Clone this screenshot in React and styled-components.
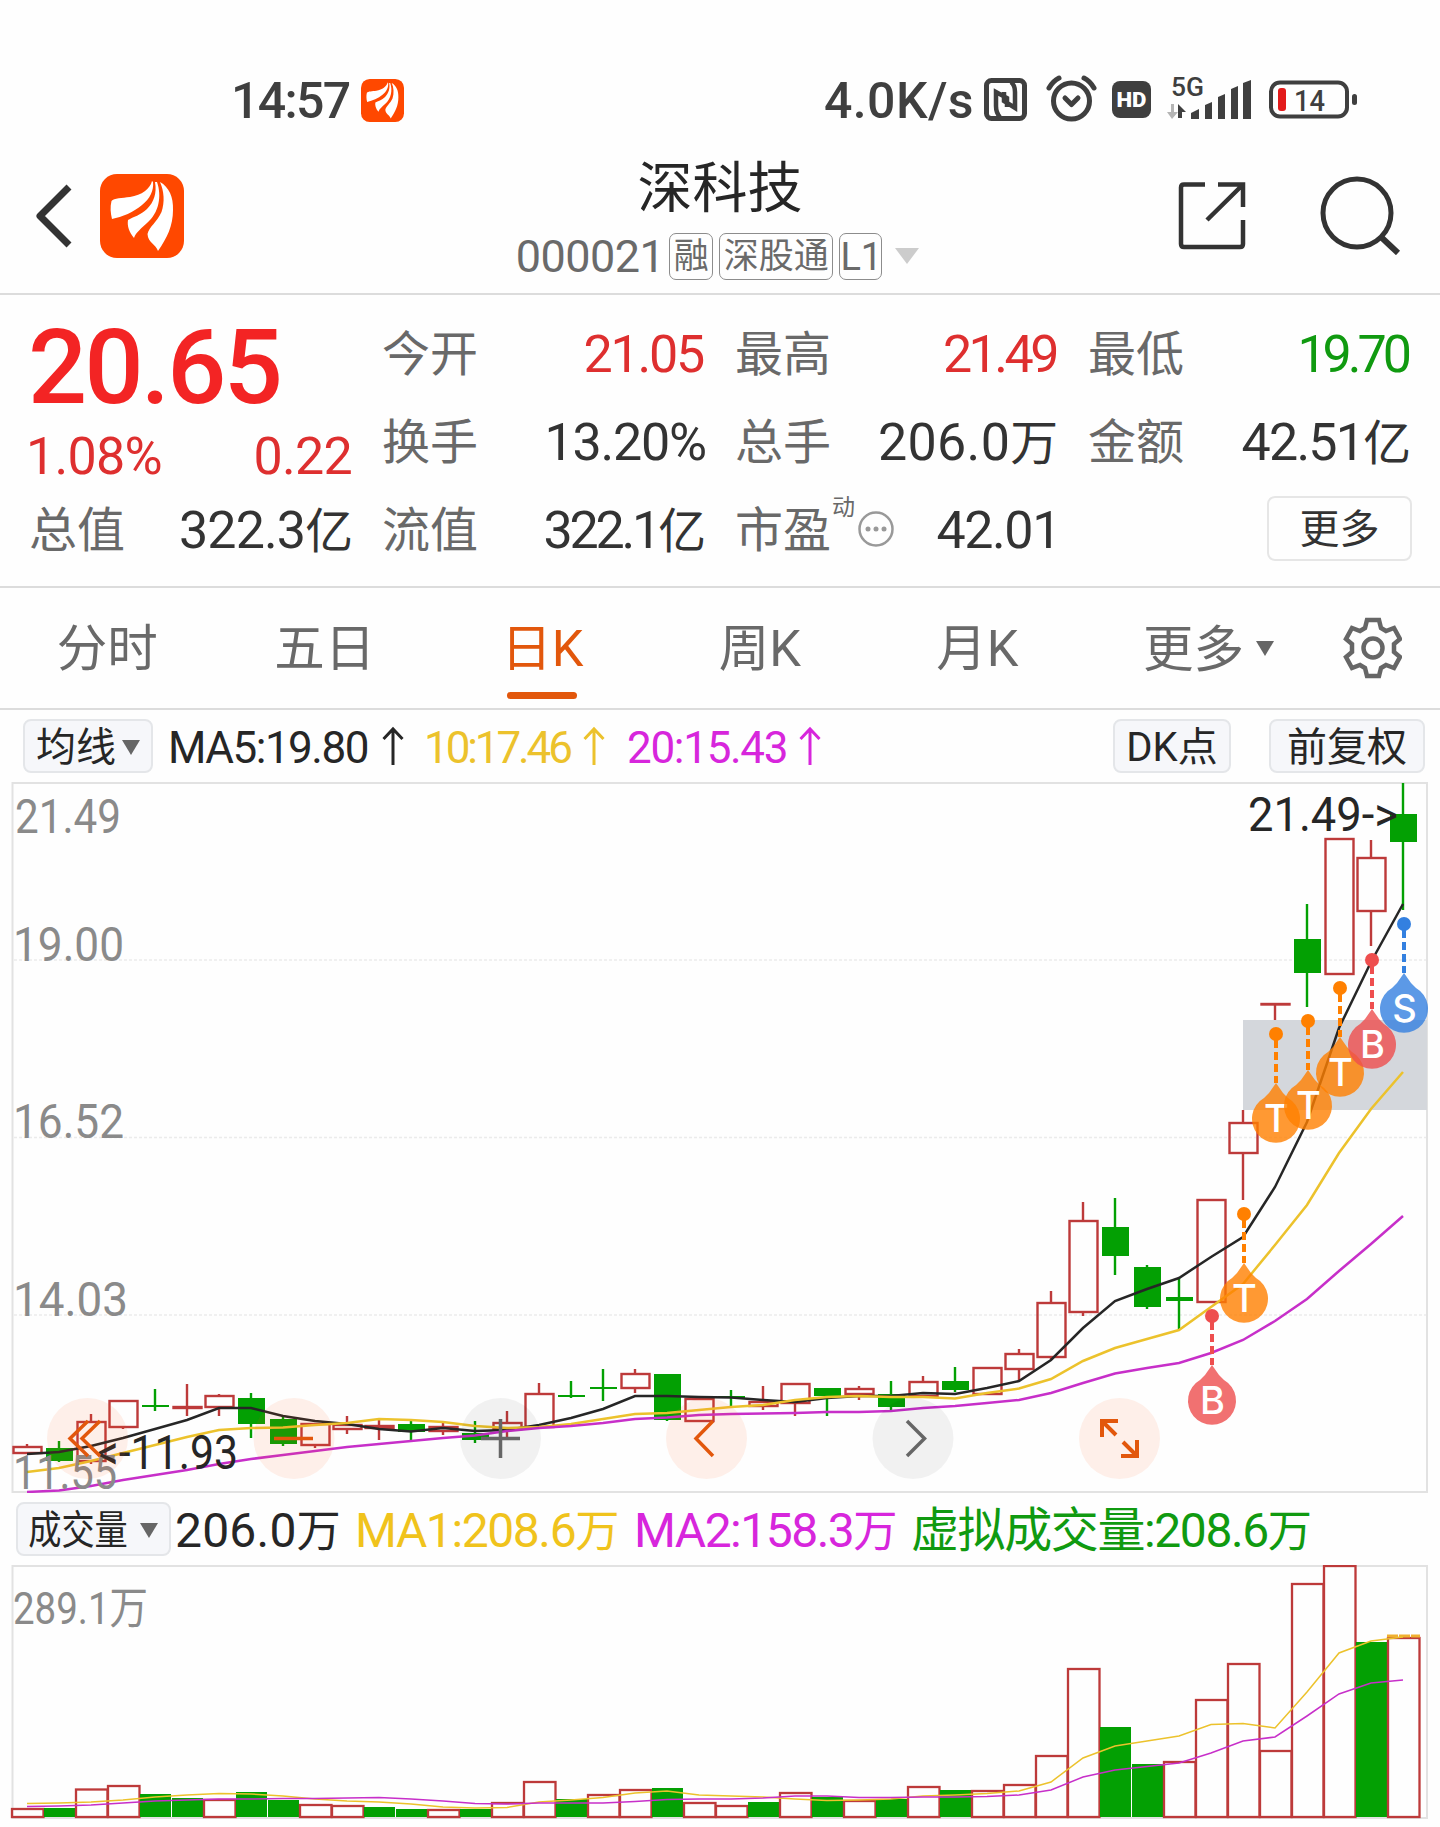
import styled, { createGlobalStyle } from "styled-components";
import { useState } from "react";

const GlobalStyle = createGlobalStyle`
  body {
    margin: 0;
    background: #fefefe;
    font-family: Roboto, "Noto Sans CJK SC", sans-serif;
    color: #2b2b2b;
  }
  * {
    box-sizing: border-box;
  }
  svg {
    display: block;
    flex: none;
  }
`;

const Page = styled.div`
  width: 1440px;
  height: 1827px;
  overflow: hidden;
  display: flex;
  flex-direction: column;
`;

const StatusBar = styled.div`
  height: 138px;
  padding: 62px 82px 0 231px;
  display: flex;
  align-items: center;
  color: #3f3f3f;
`;
const Clock = styled.span`
  font-size: 50px;
  font-weight: 500;
  letter-spacing: -1.7px;
  width: 130px;
  padding-top: 2px;
`;
const Speed = styled.span`
  font-size: 50px;
  font-weight: 500;
  letter-spacing: 0.4px;
  margin-left: auto;
  width: 160px;
  padding-top: 2px;
  white-space: nowrap;
`;

const Header = styled.div`
  height: 157px;
  border-bottom: 2px solid #dcdcdc;
  display: flex;
  justify-content: space-between;
  padding: 0 39px 0 34px;
`;
const HeaderSide = styled.div`
  display: flex;
  align-items: center;
  gap: ${(props) => props.$gap};
  width: 400px;
  justify-content: ${(props) => (props.$end ? "flex-end" : "flex-start")};
  height: ${(props) => (props.$end ? "154px" : "156px")};
`;
const TitleBox = styled.div`
  display: flex;
  flex-direction: column;
  align-items: center;
  padding-top: 14px;
`;
const StockName = styled.div`
  font-size: 55px;
  line-height: 72px;
  color: #262626;
  padding-left: 5px;
`;
const CodeRow = styled.div`
  display: flex;
  align-items: center;
  gap: 6px;
  margin-top: 8px;
  height: 48px;
  font-size: 45px;
  line-height: 48px;
  color: #6a6a6a;
  white-space: nowrap;
`;
const Code = styled.span`
  letter-spacing: -0.5px;
  padding-top: 2px;
  margin-right: -1px;
`;
const Tag = styled.span`
  border: 1.5px solid #8c8c8c;
  border-radius: 7px;
  height: 47px;
  width: ${(props) => props.$w}px;
  font-size: ${(props) => props.$size || 35}px;
  line-height: 46px;
  text-align: center;
`;
const Triangle = styled.i`
  border: solid transparent;
  border-width: ${(props) => props.$h}px ${(props) => props.$w / 2}px 0;
  border-top-color: ${(props) => props.color || "#666"};
  margin-left: ${(props) => props.$ml || 0}px;
`;

const Quote = styled.div`
  height: 293px;
  border-bottom: 2px solid #dcdcdc;
  padding: 16px 30px 0 29px;
  display: grid;
  grid-template-columns: repeat(4, 320px);
  grid-template-rows: repeat(3, 88px);
  column-gap: 33px;
`;
const PriceBox = styled.div`
  grid-row: span 2;
  color: #de2f2f;
`;
const Price = styled.div`
  font-size: 104px;
  font-weight: 500;
  line-height: 100px;
  padding-top: 7px;
  letter-spacing: -2.6px;
  margin-left: -1px;
  color: #f32424;
`;
const Change = styled.div`
  display: flex;
  justify-content: space-between;
  line-height: 78px;
  font-size: 52px;
  margin: 0 -3px 0 -3px;
  letter-spacing: -0.7px;
`;
const Cell = styled.div`
  display: flex;
  justify-content: space-between;
  align-items: center;
  line-height: 88px;
  white-space: nowrap;
`;
const Label = styled.span`
  font-size: 48px;
  color: #696969;
  display: flex;
  align-items: center;
`;
const Value = styled.span`
  font-size: 52px;
  color: ${(props) => props.color || "#333"};
  letter-spacing: ${(props) => props.$track || 0}px;
  margin-right: ${(props) => props.$mr}px;
`;
const Unit = styled.span`
  font-size: 0.92em;
  letter-spacing: 0;
`;
const Dynamic = styled.span`
  font-size: 23px;
  line-height: 24px;
  align-self: flex-start;
  margin: 9px 3px 0 1px;
`;
const MoreButton = styled.button`
  justify-self: end;
  align-self: center;
  margin: 0 -4px 5px 0;
  width: 145px;
  height: 65px;
  border: 2px solid #e6e6e6;
  border-radius: 8px;
  background: none;
  padding: 2px 0 0;
  font: 40px/1 Roboto, "Noto Sans CJK SC", sans-serif;
  color: #333;
`;

const Tabs = styled.div`
  height: 122px;
  border-bottom: 2px solid #dcdcdc;
  display: flex;
`;
const Tab = styled.div`
  width: ${(props) => props.$w || 217.5}px;
  display: flex;
  align-items: center;
  justify-content: center;
  position: relative;
  font-size: 50.5px;
  line-height: 1;
  padding: ${(props) => (props.$w ? "0" : "3px 3px 0 0")};
  color: ${(props) => (props.$active ? "#e2570c" : "#696969")};
  cursor: pointer;
  &::after {
    content: "";
    display: ${(props) => (props.$active ? "block" : "none")};
    position: absolute;
    left: 72px;
    bottom: 9px;
    width: 70px;
    height: 7px;
    border-radius: 4px;
    background: #e2570c;
  }
`;
const TabText = styled.span`
  padding-top: 4px;
`;

const IndicatorBar = styled.div`
  height: 72px;
  display: flex;
  align-items: center;
  padding: 0 15px 0 ${(props) => props.$left}px;
  white-space: nowrap;
`;
const Pill = styled.button`
  width: ${(props) => props.$w}px;
  height: 54px;
  margin: 0 0 0 ${(props) => props.$ml || 0}px;
  padding: 3px 0 0;
  border: 2px solid #e4e6e9;
  border-radius: 8px;
  background: #f6f7fa;
  font: 40px/1 Roboto, "Noto Sans CJK SC", sans-serif;
  color: #262626;
  display: flex;
  align-items: center;
  justify-content: center;
`;
const Narrow = styled.span`
  transform: scaleX(0.83);
  margin: 0 -11px;
`;
const Reading = styled.span`
  font-size: ${(props) => props.$size || 44}px;
  line-height: 1;
  color: ${(props) => props.color};
  width: ${(props) => props.$w}px;
  margin-left: ${(props) => props.$ml}px;
  padding-top: 3px;
  letter-spacing: ${(props) => props.$track || 0}px;
`;
const Spacer = styled.div`
  flex: 1;
`;

const RED = "#bd3a3a";
const GREEN = "#03a003";
const GOLD = "#ecc22c";
const PURPLE = "#c72fc9";

const STEP = 32;
const cx = (i) => 27 + i * STEP;

// [up, high, body top, body bottom, low]
const CANDLES = [
  [1, 1444, 1447, 1453, 1453], [0, 1441, 1448, 1461, 1462], [1, 1414, 1422, 1461, 1464],
  [1, 1401, 1401, 1427, 1429], [0, 1389, 1405, 1407, 1411], [1, 1384, 1407, 1408, 1416],
  [1, 1394, 1396, 1407, 1416], [0, 1393, 1398, 1424, 1438], [0, 1416, 1419, 1444, 1446],
  [1, 1424, 1424, 1445, 1448], [1, 1416, 1425, 1429, 1434], [1, 1420, 1426, 1428, 1440],
  [0, 1421, 1424, 1432, 1440], [1, 1422, 1427, 1431, 1435], [0, 1421, 1433, 1440, 1443],
  [1, 1411, 1423, 1429, 1437], [1, 1383, 1394, 1427, 1427], [0, 1381, 1395, 1397, 1398],
  [0, 1369, 1387, 1389, 1401], [1, 1369, 1374, 1388, 1393], [0, 1374, 1374, 1420, 1421],
  [1, 1399, 1399, 1421, 1422], [0, 1390, 1396, 1398, 1406], [1, 1386, 1402, 1406, 1410],
  [1, 1384, 1384, 1403, 1416], [0, 1388, 1388, 1396, 1416], [1, 1386, 1389, 1394, 1400],
  [0, 1381, 1394, 1407, 1410], [1, 1376, 1382, 1396, 1396], [0, 1367, 1381, 1390, 1392],
  [1, 1368, 1368, 1394, 1394], [1, 1349, 1354, 1369, 1380], [1, 1291, 1303, 1357, 1359],
  [1, 1202, 1221, 1312, 1316], [0, 1198, 1227, 1256, 1275], [0, 1265, 1267, 1307, 1309],
  [0, 1278, 1297, 1301, 1329], [1, 1200, 1200, 1302, 1302], [1, 1110, 1123, 1153, 1200],
  [1, 1004, 1004, 1004, 1020], [0, 904, 939, 973, 1007], [1, 839, 839, 974, 974],
  [1, 840, 858, 911, 946], [0, 783, 814, 842, 910],
];
const MA5 = [1454, 1452, 1446, 1438, 1429, 1420, 1408, 1408, 1416, 1421, 1424, 1429, 1431.5, 1428, 1431, 1430, 1425, 1418, 1409, 1396, 1396, 1397, 1397.5, 1400, 1402, 1398, 1396, 1396, 1393, 1394, 1388, 1381, 1360, 1328, 1301, 1289, 1278, 1257, 1237, 1187, 1122, 1028, 962, 904];
const MA10 = [1472, 1468, 1461, 1453, 1445, 1437, 1430, 1428, 1427.5, 1425, 1423, 1419, 1420, 1422, 1426, 1428, 1427, 1424, 1419, 1414, 1413, 1410, 1407, 1405, 1400, 1397, 1396, 1397, 1397, 1398.5, 1393, 1388.5, 1379, 1361, 1348, 1339, 1330, 1307, 1284, 1245, 1205, 1153, 1109, 1072];
const MA20 = [1492, 1490.5, 1486, 1480, 1475, 1470, 1464, 1459, 1455, 1451, 1447, 1444, 1441, 1438, 1435.5, 1431, 1428, 1426, 1423, 1419, 1417.5, 1415, 1414, 1413.5, 1413, 1412, 1412, 1411, 1408, 1406, 1403, 1400, 1393, 1383, 1373.5, 1368, 1363, 1353, 1340, 1321, 1299, 1271, 1244, 1216];

// [up, top]
const VOLUMES = [
  [1, 1809], [0, 1808], [1, 1789.5], [1, 1786], [0, 1794], [0, 1798], [1, 1800], [0, 1792], [0, 1800],
  [1, 1805], [1, 1806], [0, 1807], [0, 1809], [1, 1810], [0, 1809], [1, 1803], [1, 1782], [0, 1799],
  [1, 1795], [1, 1790], [0, 1788], [1, 1803], [1, 1806], [0, 1802], [1, 1793], [0, 1797], [1, 1801],
  [0, 1799], [1, 1787], [0, 1790], [1, 1791], [1, 1785], [1, 1756], [1, 1669], [0, 1727], [0, 1764],
  [1, 1762], [1, 1700], [1, 1664], [1, 1751], [1, 1584], [1, 1566], [0, 1642], [1, 1638],
];
const VMA1 = [1803.5, 1803, 1802, 1800, 1797, 1795, 1793.5, 1794, 1796, 1799, 1801, 1802, 1804, 1807, 1808, 1807.5, 1802, 1800, 1797.5, 1793, 1791, 1795, 1796, 1797, 1799, 1800.5, 1800, 1799, 1796, 1795, 1793.5, 1791, 1782, 1758, 1746, 1741, 1736, 1724.5, 1723.5, 1728, 1692, 1653, 1641, 1637];
const VMA2 = [1806.5, 1806, 1805, 1803, 1801, 1800, 1799, 1799, 1798.5, 1798.5, 1798, 1797.5, 1799, 1801, 1803.5, 1804, 1803, 1803, 1803, 1801.5, 1799.5, 1799, 1799, 1798, 1796, 1796, 1797.5, 1797.5, 1797, 1797, 1796.5, 1795, 1790, 1777, 1770, 1766.5, 1763, 1753, 1741, 1737, 1716, 1694, 1683, 1680];

const MARKS = [
  [1212, 1316, "B", "#ee4e4e"],
  [1244, 1214, "T", "#ff8000"],
  [1276, 1034, "T", "#ff8000"],
  [1308, 1021, "T", "#ff8000"],
  [1340, 988, "T", "#ff8000"],
  [1372, 960, "B", "#ee4e4e"],
  [1404, 924, "S", "#3380e0"],
];

const points = (arr) => arr.map((y, i) => `${cx(i)},${y}`).join(" ");

const Logo = ({ size }) => (
  <svg width={size} height={size} viewBox="0 0 84 84">
    <rect width="84" height="84" rx="17" fill="#ff4800" />
    <g fill="#fff">
      <path d="M52 7C50 15 42 21 30 23C22 24 14 24 11.500 27C10 33 10.500 39 12 45C22 43 34 38 42 31C50 25 54 16 53 8Z" />
      <path d="M55 8C57 19 54 28 47 35C41 41 33 43 28 46C27 52 29 58 34 64C36 58 42 54 47 49C59 39 62 22 57 8Z" />
      <path d="M60 8C69 13 73.500 23 73 36C73 52 67 64 58 77C56 70 48 69 47.500 60C49 53 57 48 61.500 38C65 28 64 17 60 8Z" />
    </g>
  </svg>
);

const StatusIcons = () => (
  <svg width="374" height="56" viewBox="984 72 374 56" fill="none" stroke="#3f3f3f">
    <rect x="986.500" y="80.500" width="38" height="38" rx="5" strokeWidth="5" />
    <path d="M1000 117Q996 113 996 106V92L1007 98V107M1011 82Q1015 85 1015 92V108L1004 101V92" strokeWidth="4.500" />
    <circle cx="1071.500" cy="101" r="18" strokeWidth="5" />
    <path d="M1065 98l6.500 6.500 6.500-6.500" strokeWidth="5" strokeLinecap="round" strokeLinejoin="round" />
    <path d="M1049 88Q1053 81 1059 78M1094 88Q1090 81 1084 78" strokeWidth="5" strokeLinecap="round" />
    <rect x="1112" y="81" width="39" height="37" rx="8" fill="#3f3f3f" stroke="none" />
    <text x="1116.500" y="107" textLength="30" lengthAdjust="spacingAndGlyphs" fontSize="21" fontWeight="900" fill="#fff" stroke="none">HD</text>
    <text x="1171" y="96" textLength="33" lengthAdjust="spacingAndGlyphs" fontSize="25" fontWeight="500" fill="#3f3f3f" stroke="none">5G</text>
    <path d="M1174 104V112H1178L1172 119L1167 112H1171V104Z" fill="#b5b5b5" stroke="none" />
    <path d="M1178 118V104L1186 112H1182V118Z" fill="#3f3f3f" stroke="none" />
    <path d="M1191 119V113L1199 109V119ZM1205 119V105L1212 102V119ZM1218 119V97L1225 94V119ZM1231 119V89L1238 86V119ZM1243 119V83L1251 80V119Z" fill="#3f3f3f" stroke="none" />
    <rect x="1271" y="82.500" width="76" height="34" rx="9" strokeWidth="4" />
    <rect x="1278" y="88" width="8" height="23" rx="3" fill="#e31b1b" stroke="none" />
    <rect x="1352" y="94" width="5" height="11" rx="2.500" fill="#3f3f3f" stroke="none" />
    <text x="1294" y="111" textLength="31" lengthAdjust="spacingAndGlyphs" fontSize="30" fontWeight="500" fill="#3f3f3f" stroke="none">14</text>
  </svg>
);

const UpArrow = ({ color }) => (
  <svg width="22" height="40" viewBox="0 0 22 40" fill="none" stroke={color} strokeWidth="3">
    <path d="M11 39V3M1.500 13L11 3L20.500 13" />
  </svg>
);

const Gear = () => (
  <svg width="60" height="62" viewBox="-31 -31 60 62" fill="none" stroke="#666" strokeWidth="4.500">
    <path d="M-6 -28H6L8 -20L13 -17L21 -20L27 -9L21 -4V4L27 9L21 20L13 17L8 20L6 28H-6L-8 20L-13 17L-21 20L-27 9L-21 4V-4L-27 -9L-21 -20L-13 -17L-8 -20Z" />
    <circle r="9.500" />
  </svg>
);

const Frame = ({ top, bottom }) => (
  <path d={`M12.500 ${top}V${bottom}M1427 ${top}V${bottom}M12 ${top + 1}H1428M12 ${bottom - 1}H1428`} fill="none" stroke="#e2e2e2" strokeWidth="2" />
);

const ChartText = ({ x, y, w, size = 48, color = "#8a8a8a", children }) => (
  <text x={x} y={y} textLength={w} lengthAdjust="spacingAndGlyphs" fontSize={size} fill={color}>{children}</text>
);

const Candle = ({ i, data }) => {
  const [up, high, top, bottom, low] = data;
  const x = cx(i);
  const color = up ? RED : GREEN;
  return (
    <g stroke={color} strokeWidth="2.400">
      <path d={`M${x} ${high}V${top}M${x} ${bottom}V${low}`} />
      {up ? (
        <rect x={x - 13.5} y={top} width="28" height={bottom - top || 0.5} fill="none" />
      ) : (
        <rect x={x - 13} y={top} width="27" height={bottom - top} fill={color} stroke="none" />
      )}
    </g>
  );
};

const Mark = ({ data }) => {
  const [x, y, letter, color] = data;
  return (
    <g>
      <circle cx={x} cy={y} r="7" fill={color} />
      <path d={`M${x} ${y + 6}V${y + 49}`} stroke={color} strokeWidth="4" strokeDasharray="8 4" />
      <path d={`M${x} ${y + 49}L${x + 7} ${y + 59}Q${x + 9} ${y + 61} ${x + 12} ${y + 64}A24 24 0 1 1 ${x - 12} ${y + 64}Q${x - 9} ${y + 61} ${x - 7} ${y + 59}Z`} fill={color} opacity="0.8" />
      <text x={x + 0.5} y={y + 98} textAnchor="middle" fontFamily="Inter, sans-serif" fontSize="38" fontWeight="500" fill="#fff">{letter}</text>
    </g>
  );
};

const ChartControls = () => (
  <g fill="none" strokeWidth="3.500">
    {[87.5, 294, 706.5, 1119.5].map((x) => (
      <circle key={x} cx={x} cy="1438.500" r="40.500" fill="#ff5a14" opacity="0.09" />
    ))}
    {[500.5, 913].map((x) => (
      <circle key={x} cx={x} cy="1438.500" r="40.500" fill="#000" opacity="0.05" />
    ))}
    <path d="M88 1421L70 1438.500L88 1456M100 1421L82 1438.500L100 1456M274 1438.500H313M713 1421L696 1438.500L713 1456" stroke="#e2570c" />
    <path d="M481 1438.500H520M500.500 1419V1458M907 1421L924.500 1438.500L907 1456" stroke="#666" />
    <path d="M1118 1421H1102V1437M1102 1421L1116 1435M1121 1456H1137V1440M1137 1456L1123 1442" stroke="#e2570c" strokeWidth="4" />
  </g>
);

const PriceChart = () => (
  <svg width="1440" height="711" viewBox="0 782 1440 711">
    <path d="M14 960H1426M14 1137.500H1426M14 1315H1426" stroke="#ebebeb" strokeWidth="1.500" strokeDasharray="3 2" />
    <Frame top={782} bottom={1493} />
    <rect x="1243" y="1020" width="184" height="90" fill="#d4d7dc" />
    {CANDLES.map((c, i) => <Candle key={i} i={i} data={c} />)}
    <g fill="none" strokeWidth="2.500">
      <polyline points={points(MA5)} stroke="#262626" />
      <polyline points={points(MA10)} stroke={GOLD} />
      <polyline points={points(MA20)} stroke={PURPLE} />
    </g>
    <ChartText x={15} y={833} w={106}>21.49</ChartText>
    <ChartText x={13} y={961} w={111}>19.00</ChartText>
    <ChartText x={13} y={1138} w={111}>16.52</ChartText>
    <ChartText x={13} y={1316} w={115}>14.03</ChartText>
    <ChartText x={13} y={1489} w={104}>11.55</ChartText>
    <ChartText x={1248} y={831} w={150} color="#262626">21.49-&gt;</ChartText>
    <ChartText x={97} y={1469} w={141} color="#262626">&lt;-11.93</ChartText>
    <ChartControls />
    {MARKS.map((m) => <Mark key={m[0]} data={m} />)}
  </svg>
);

const VolumeChart = () => (
  <svg width="1440" height="254" viewBox="0 1565 1440 254">
    <Frame top={1565} bottom={1819} />
    {VOLUMES.map(([up, top], i) =>
      up ? (
        <rect key={i} x={cx(i) - 15} y={top} width="31.500" height={1817 - top} fill="none" stroke={RED} strokeWidth="2.300" />
      ) : (
        <rect key={i} x={cx(i) - 15} y={top} width="31" height={1817 - top} fill={GREEN} />
      )
    )}
    <path d="M1387 1636H1420" stroke="#f0b030" strokeWidth="3" strokeDasharray="11 1" />
    <g fill="none" strokeWidth="1.500">
      <polyline points={points(VMA1)} stroke={GOLD} />
      <polyline points={points(VMA2)} stroke={PURPLE} />
    </g>
    <ChartText x={13} y={1624} w={135} size={44}>289.1万</ChartText>
  </svg>
);

const TABS = ["分时", "五日", "日K", "周K", "月K"];

const App = () => {
  const [tab, setTab] = useState("日K");
  return (
    <Page>
      <GlobalStyle />
      <StatusBar>
        <Clock>14:57</Clock>
        <Logo size={43} />
        <Speed>4.0K/s</Speed>
        <StatusIcons />
      </StatusBar>

      <Header>
        <HeaderSide $gap="28px">
          <svg width="38" height="64" viewBox="0 0 38 64" fill="none" stroke="#333" strokeWidth="7">
            <path d="M35 3L6 32L35 61" strokeLinejoin="round" />
          </svg>
          <Logo size={84} />
        </HeaderSide>
        <TitleBox>
          <StockName>深科技</StockName>
          <CodeRow>
            <Code>000021</Code>
            <Tag $w={44}>融</Tag>
            <Tag $w={114}>深股通</Tag>
            <Tag $w={43} $size={38}>L1</Tag>
            <Triangle $w={25} $h={16} $ml={7} color="#ccc" />
          </CodeRow>
        </TitleBox>
        <HeaderSide $end $gap="72px">
          <svg width="70" height="70" viewBox="1178 180 70 70" fill="none" stroke="#333" strokeWidth="4.500">
            <path d="M1206 184.500H1185Q1182 184.500 1182 187.500V244Q1182 247 1185 247H1241Q1244 247 1244 244V220M1219 184.500H1244V207M1244 184.500L1208 220" />
          </svg>
          <svg width="82" height="80" viewBox="1319 174 82 80" fill="none" stroke="#333" strokeWidth="5">
            <circle cx="1357" cy="212" r="34" />
            <path d="M1381 236L1398 252" strokeWidth="6" />
          </svg>
        </HeaderSide>
      </Header>

      <Quote>
        <PriceBox>
          <Price>20.65</Price>
          <Change>
            <span>1.08%</span>
            <span>0.22</span>
          </Change>
        </PriceBox>
        <Cell><Label>今开</Label><Value color="#de2f2f" $track={-2.2} $mr={-1}>21.05</Value></Cell>
        <Cell><Label>最高</Label><Value color="#de2f2f" $track={-3.5} $mr={-1}>21.49</Value></Cell>
        <Cell><Label>最低</Label><Value color="#109a10" $track={-4} $mr={0}>19.70</Value></Cell>
        <Cell><Label>换手</Label><Value $track={-1.2} $mr={-4}>13.20%</Value></Cell>
        <Cell><Label>总手</Label><Value $track={0.3} $mr={-3}>206.0<Unit>万</Unit></Value></Cell>
        <Cell><Label>金额</Label><Value $track={-1.8} $mr={-3}>42.51<Unit>亿</Unit></Value></Cell>
        <Cell><Label>总值</Label><Value $track={-0.9} $mr={-4}>322.3<Unit>亿</Unit></Value></Cell>
        <Cell><Label>流值</Label><Value $track={-3.2} $mr={-4}>322.1<Unit>亿</Unit></Value></Cell>
        <Cell>
          <Label>
            市盈<Dynamic>动</Dynamic>
            <svg width="36" height="40" viewBox="-18 -18 36 40">
              <circle r="16.500" fill="none" stroke="#999" strokeWidth="2.500" />
              <g fill="#999"><circle cx="-8" r="2.500" /><circle r="2.500" /><circle cx="8" r="2.500" /></g>
            </svg>
          </Label>
          <Value $track={-1.4} $mr={-5}>42.01</Value>
        </Cell>
        <MoreButton>更多</MoreButton>
      </Quote>

      <Tabs>
        {TABS.map((t) => (
          <Tab key={t} $active={t === tab} onClick={() => setTab(t)}>{t}</Tab>
        ))}
        <Tab $w={242}><TabText>更多</TabText><Triangle $w={18} $h={15} $ml={12} /></Tab>
        <Tab $w={84}><Gear /></Tab>
      </Tabs>

      <IndicatorBar $left={23}>
        <Pill $w={130}>均线<Triangle $w={18} $h={15} $ml={6} /></Pill>
        <Reading color="#262626" $ml={15} $w={214} $track={-1.5}>MA5:19.80</Reading>
        <UpArrow color="#262626" />
        <Reading color={GOLD} $ml={20} $w={159} $track={-3.1}>10:17.46</Reading>
        <UpArrow color={GOLD} />
        <Reading color="#d726dc" $ml={22} $w={172} $track={-1.3}>20:15.43</Reading>
        <UpArrow color="#d726dc" />
        <Spacer />
        <Pill $w={118}>DK点</Pill>
        <Pill $w={156} $ml={38}>前复权</Pill>
      </IndicatorBar>
      <PriceChart />

      <IndicatorBar $left={16}>
        <Pill $w={155}><Narrow>成交量</Narrow><Triangle $w={18} $h={15} $ml={13} /></Pill>
        <Reading color="#262626" $size={48} $ml={4} $w={180} $track={0.2}>206.0<Unit>万</Unit></Reading>
        <Reading color="#f0c31c" $size={48} $ml={0} $w={279} $track={-1.4}>MA1:208.6<Unit>万</Unit></Reading>
        <Reading color="#d726dc" $size={48} $ml={0} $w={277} $track={-1.5}>MA2:158.3<Unit>万</Unit></Reading>
        <Reading color="#109a10" $size={48} $ml={0} $track={-1.4}>虚拟成交量:208.6<Unit>万</Unit></Reading>
      </IndicatorBar>
      <VolumeChart />
    </Page>
  );
};

export default App;
